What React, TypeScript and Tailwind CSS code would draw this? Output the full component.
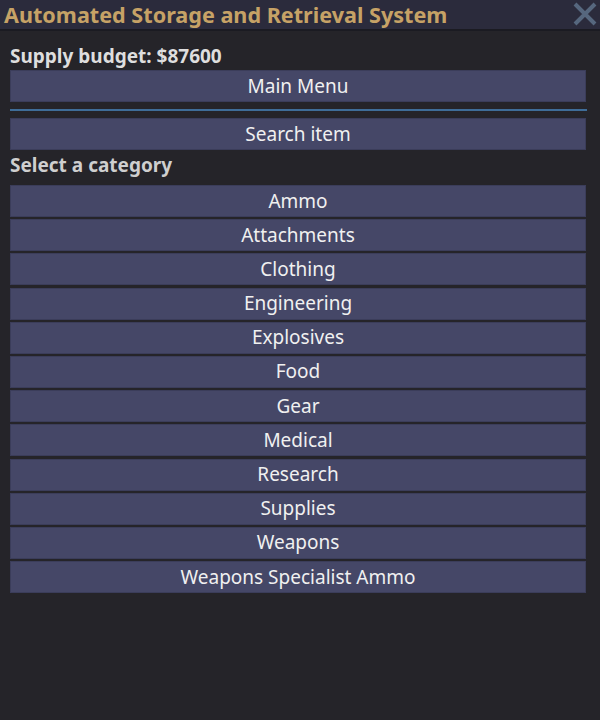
import React from "react";

const categories = [
  "Ammo",
  "Attachments",
  "Clothing",
  "Engineering",
  "Explosives",
  "Food",
  "Gear",
  "Medical",
  "Research",
  "Supplies",
  "Weapons",
  "Weapons Specialist Ammo",
];

function Btn({ label }: { label: string }) {
  return (
    <div className="h-[32px] w-full flex items-center justify-center bg-[#454767] border border-[#3b3d5a] text-[#f0f0f0] text-[19px] leading-none">
      {label}
    </div>
  );
}

export default function App() {
  return (
    <div
      className="w-[600px] h-[720px] bg-[#252429] flex flex-col overflow-hidden"
      style={{ fontFamily: '"Noto Sans", "Open Sans", sans-serif' }}
    >
      <div className="h-[31px] shrink-0 bg-[#2b2b3c] border-b-2 border-[#1b1b22] flex items-center justify-between pl-[4px] pr-[2px]">
        <span className="text-[#c6a266] font-bold text-[21.6px] leading-none">
          Automated Storage and Retrieval System
        </span>
        <svg width="26" height="26" viewBox="0 0 26 26" className="mb-[2px]">
          <path d="M3 3 L23 23 M23 3 L3 23" stroke="#56677e" strokeWidth="4" strokeLinecap="butt" />
        </svg>
      </div>
      <div className="flex flex-col px-[10px] pr-[14px]">
        <div className="mt-[16px] text-[#dedede] font-bold text-[19px] leading-none">
          Supply budget: $87600
        </div>
        <div className="mt-[4px]">
          <Btn label="Main Menu" />
        </div>
        <div className="mt-[7px] h-[2px] bg-[#3f6d98] mr-[-1px]" />
        <div className="mt-[7px]">
          <Btn label="Search item" />
        </div>
        <div className="mt-[6px] text-[#cfcfcf] font-bold text-[19px] leading-none">
          Select a category
        </div>
        <div className="mt-[10px] flex flex-col gap-[2.2px]">
          {categories.map((c) => (
            <Btn key={c} label={c} />
          ))}
        </div>
      </div>
    </div>
  );
}
